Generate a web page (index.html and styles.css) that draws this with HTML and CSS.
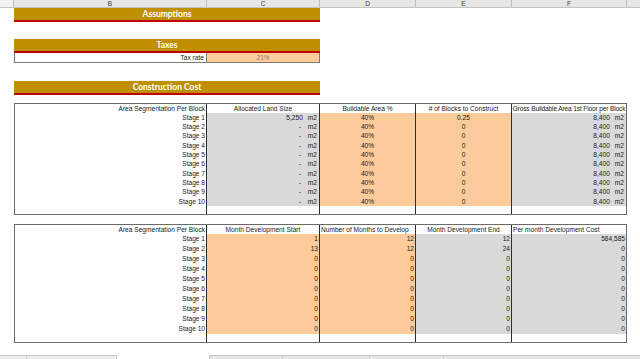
FILE: index.html
```html
<!DOCTYPE html>
<html>
<head>
<meta charset="utf-8">
<link rel="stylesheet" href="styles.css">
</head>
<body>
<div class="sheet">
  <div class="colhead">
    <div class="ch cha"></div>
    <div class="ch chb">B</div>
    <div class="ch chc">C</div>
    <div class="ch chd">D</div>
    <div class="ch che">E</div>
    <div class="ch chf">F</div>
    <div class="ch chg"></div>
  </div>
  <div class="content">
    <div class="bar bar-assump">Assumptions</div>
    <div class="bar bar-taxes">Taxes</div>
    <div class="taxrow">
      <div class="tlabel">Tax rate</div>
      <div class="tval">21%</div>
    </div>
    <div class="bar bar-cc">Construction Cost</div>

    <div class="tbl t1">
      <div class="c r">Area Segmentation Per Block</div>
      <div class="c ctr">Allocated Land Size</div>
      <div class="c ctr">Buildable Area %</div>
      <div class="c ctr">#&nbsp;of Blocks to Construct</div>
      <div class="c ctr tight last">Gross Buildable Area 1st Floor per Block</div>

      <div class="c r">Stage 1</div>
      <div class="c gr num"><span>5,250</span><span class="u">m2</span></div>
      <div class="c pe ctr">40%</div>
      <div class="c pe ctr">0.25</div>
      <div class="c gr num last"><span>8,400</span><span class="u">m2</span></div>

      <div class="c r">Stage 2</div>
      <div class="c gr num"><span class="dash">-</span><span class="u">m2</span></div>
      <div class="c pe ctr">40%</div>
      <div class="c pe ctr">0</div>
      <div class="c gr num last"><span>8,400</span><span class="u">m2</span></div>

      <div class="c r">Stage 3</div>
      <div class="c gr num"><span class="dash">-</span><span class="u">m2</span></div>
      <div class="c pe ctr">40%</div>
      <div class="c pe ctr">0</div>
      <div class="c gr num last"><span>8,400</span><span class="u">m2</span></div>

      <div class="c r">Stage 4</div>
      <div class="c gr num"><span class="dash">-</span><span class="u">m2</span></div>
      <div class="c pe ctr">40%</div>
      <div class="c pe ctr">0</div>
      <div class="c gr num last"><span>8,400</span><span class="u">m2</span></div>

      <div class="c r">Stage 5</div>
      <div class="c gr num"><span class="dash">-</span><span class="u">m2</span></div>
      <div class="c pe ctr">40%</div>
      <div class="c pe ctr">0</div>
      <div class="c gr num last"><span>8,400</span><span class="u">m2</span></div>

      <div class="c r">Stage 6</div>
      <div class="c gr num"><span class="dash">-</span><span class="u">m2</span></div>
      <div class="c pe ctr">40%</div>
      <div class="c pe ctr">0</div>
      <div class="c gr num last"><span>8,400</span><span class="u">m2</span></div>

      <div class="c r">Stage 7</div>
      <div class="c gr num"><span class="dash">-</span><span class="u">m2</span></div>
      <div class="c pe ctr">40%</div>
      <div class="c pe ctr">0</div>
      <div class="c gr num last"><span>8,400</span><span class="u">m2</span></div>

      <div class="c r">Stage 8</div>
      <div class="c gr num"><span class="dash">-</span><span class="u">m2</span></div>
      <div class="c pe ctr">40%</div>
      <div class="c pe ctr">0</div>
      <div class="c gr num last"><span>8,400</span><span class="u">m2</span></div>

      <div class="c r">Stage 9</div>
      <div class="c gr num"><span class="dash">-</span><span class="u">m2</span></div>
      <div class="c pe ctr">40%</div>
      <div class="c pe ctr">0</div>
      <div class="c gr num last"><span>8,400</span><span class="u">m2</span></div>

      <div class="c r">Stage 10</div>
      <div class="c gr num"><span class="dash">-</span><span class="u">m2</span></div>
      <div class="c pe ctr">40%</div>
      <div class="c pe ctr">0</div>
      <div class="c gr num last"><span>8,400</span><span class="u">m2</span></div>

      <div class="c"></div>
      <div class="c"></div>
      <div class="c"></div>
      <div class="c"></div>
      <div class="c last"></div>
    </div>

    <div class="tbl t2">
      <div class="c r">Area Segmentation Per Block</div>
      <div class="c ctr">Month Development Start</div>
      <div class="c l">Number of Months to Develop</div>
      <div class="c ctr">Month Development End</div>
      <div class="c l last">Per month Development Cost</div>

      <div class="c r">Stage 1</div>
      <div class="c pe r">1</div>
      <div class="c pe r">12</div>
      <div class="c gr r">12</div>
      <div class="c gr r last">584,585</div>

      <div class="c r">Stage 2</div>
      <div class="c pe r">13</div>
      <div class="c pe r">12</div>
      <div class="c gr r">24</div>
      <div class="c gr r last">0</div>

      <div class="c r">Stage 3</div>
      <div class="c pe r">0</div>
      <div class="c pe r">0</div>
      <div class="c gr r">0</div>
      <div class="c gr r last">0</div>

      <div class="c r">Stage 4</div>
      <div class="c pe r">0</div>
      <div class="c pe r">0</div>
      <div class="c gr r">0</div>
      <div class="c gr r last">0</div>

      <div class="c r">Stage 5</div>
      <div class="c pe r">0</div>
      <div class="c pe r">0</div>
      <div class="c gr r">0</div>
      <div class="c gr r last">0</div>

      <div class="c r">Stage 6</div>
      <div class="c pe r">0</div>
      <div class="c pe r">0</div>
      <div class="c gr r">0</div>
      <div class="c gr r last">0</div>

      <div class="c r">Stage 7</div>
      <div class="c pe r">0</div>
      <div class="c pe r">0</div>
      <div class="c gr r">0</div>
      <div class="c gr r last">0</div>

      <div class="c r">Stage 8</div>
      <div class="c pe r">0</div>
      <div class="c pe r">0</div>
      <div class="c gr r">0</div>
      <div class="c gr r last">0</div>

      <div class="c r">Stage 9</div>
      <div class="c pe r">0</div>
      <div class="c pe r">0</div>
      <div class="c gr r">0</div>
      <div class="c gr r last">0</div>

      <div class="c r">Stage 10</div>
      <div class="c pe r">0</div>
      <div class="c pe r">0</div>
      <div class="c gr r">0</div>
      <div class="c gr r last">0</div>

      <div class="c"></div>
      <div class="c"></div>
      <div class="c"></div>
      <div class="c"></div>
      <div class="c last"></div>
    </div>
  </div>
  <div class="bottom">
    <div class="tabbox tb1">
      <div class="seg s1"></div>
      <div class="seg s2"></div>
    </div>
    <div class="tabbox tb2">
      <div class="seg s3"></div>
      <div class="seg s4"></div>
      <div class="seg s5"></div>
      <div class="seg s6"></div>
    </div>
  </div>
</div>
</body>
</html>
```
FILE: styles.css
```css
* { box-sizing: border-box; }
html, body { margin: 0; padding: 0; background: #ffffff; }
body { width: 640px; height: 359px; overflow: hidden; font-family: "Liberation Sans", Arial, sans-serif; }

.sheet { width: 640px; height: 359px; overflow: hidden; display: flex; flex-direction: column; }

.colhead { display: flex; height: 8px; border-bottom: 1px solid #c4c4c4; background: #e6e6e6; flex: none; }
.ch { height: 7px; font-size: 6.5px; line-height: 7px; color: #3a3a3a; text-align: center; border-right: 1px solid #c0c0c0; }
.cha { width: 14px; background: #f2f2f2; }
.chb { width: 193px; }
.chc { width: 113px; }
.chd { width: 96px; }
.che { width: 96px; }
.chf { width: 115px; }
.chg { width: 13px; border-right: none; }

.content { padding-left: 14px; flex: none; }

.bar { width: 306px; height: 14px; background: #bf8f00; border-bottom: 2px solid #c00000; color: #ffffff;
  font-family: Lato, "Liberation Sans", sans-serif; font-weight: 700; font-size: 8.5px; line-height: 12px; text-align: center; }
.bar-taxes { margin-top: 17px; }
.bar-cc { margin-top: 18px; }

.taxrow { display: flex; width: 306px; height: 10px; border-left: 1px solid #7a7a7a; border-bottom: 1px solid #7a7a7a; }
.tlabel { width: 192px; font-size: 6.6px; line-height: 9px; text-align: right; padding-right: 2px; color: #1a1a1a; border-right: 1px solid #7a7a7a; }
.tval { width: 113px; background: #fbcb9b; font-size: 6.4px; line-height: 9px; text-align: center; color: #8c7868; border-right: 1px solid #7a7a7a; }

.tbl { display: grid; width: 613px; border: 1px solid #6a6a6a; grid-template-columns: 192px 113px 96px 96px 114px; }
.t1 { margin-top: 8px; grid-template-rows: 8.5px repeat(10, 9.33px) 8.2px; }
.t2 { margin-top: 9px; grid-template-rows: 9px repeat(10, 10px) 8px; }

.c { border-right: 1px solid #2e2e2e; font-size: 6.6px; color: #1a1a1a; white-space: nowrap; overflow: hidden;
  display: flex; align-items: center; padding: 0 1px; }
.c.last { border-right: none; }
.r { justify-content: flex-end; }
.ctr { justify-content: center; }
.l { justify-content: flex-start; }
.tight { letter-spacing: -0.15px; padding: 0; }
.gr { background: #d9d9d9; }
.pe { background: #fbcb9b; }
.num { justify-content: flex-end; padding-right: 2px; }
.num .u { margin-left: 5px; }
.num .dash { margin-right: 2px; }

.bottom { margin-top: 12px; display: flex; height: 6px; flex: none; }
.tabbox { display: flex; height: 6px; background: #ececec; border-top: 1px solid #c8c8c8; }
.tb1 { width: 117px; border-right: 1px solid #c8c8c8; }
.tb2 { margin-left: 92px; width: 431px; border-left: 1px solid #c8c8c8; background: #e6e6e6; }
.seg { height: 5px; border-right: 1px solid #cfcfcf; }
.s1 { width: 27px; }
.s2 { flex: 1; border-right: none; }
.s3 { width: 73px; }
.s4 { width: 87px; }
.s5 { width: 74px; }
.s6 { flex: 1; border-right: none; }
```
